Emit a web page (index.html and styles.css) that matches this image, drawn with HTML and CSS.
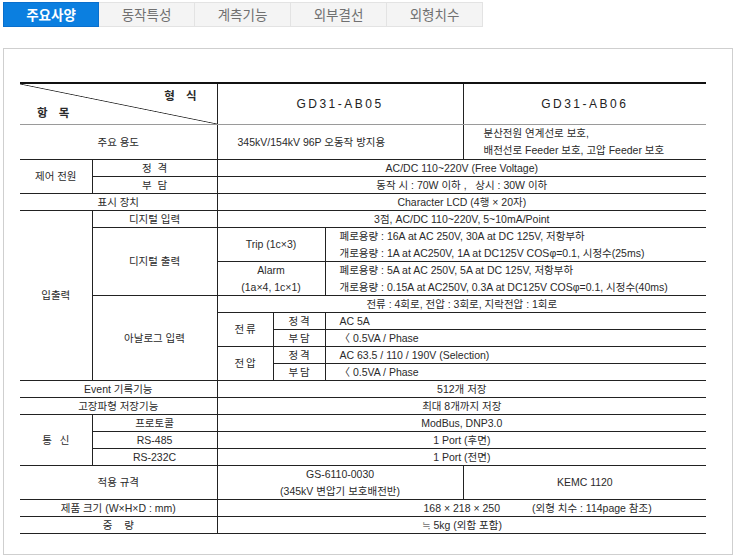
FILE: index.html
```html
<!DOCTYPE html>
<html lang="ko">
<head>
<meta charset="utf-8">
<title>주요사양</title>
<link rel="stylesheet" href="styles.css">
</head>
<body>
<div class="tabs">
  <div class="tab active">주요사양</div>
  <div class="tab">동작특성</div>
  <div class="tab">계측기능</div>
  <div class="tab">외부결선</div>
  <div class="tab">외형치수</div>
</div>
<div class="box">
  <table class="spec">
    <colgroup>
      <col class="c1"><col class="c2"><col class="c3"><col class="c4"><col class="c5"><col class="c6">
    </colgroup>
    <tr class="head">
      <td colspan="2" class="diag">
        <div class="diag-in">
          <span class="d-top">형 식</span>
          <span class="d-bot">항 목</span>
        </div>
      </td>
      <td colspan="3" class="model">GD31-AB05</td>
      <td class="model">GD31-AB06</td>
    </tr>
    <tr class="tall">
      <td colspan="2">주요 용도</td>
      <td colspan="3" class="left20">345kV/154kV 96P 오동작 방지용</td>
      <td class="left20 two">분산전원 연계선로 보호,<br>배전선로 Feeder 보호, 고압 Feeder 보호</td>
    </tr>
    <tr>
      <td rowspan="2">제어 전원</td>
      <td class="sp3">정 격</td>
      <td colspan="4">AC/DC 110~220V (Free Voltage)</td>
    </tr>
    <tr>
      <td class="sp3">부 담</td>
      <td colspan="4">동작 시 : 70W 이하 ,&nbsp;&nbsp; 상시 : 30W 이하</td>
    </tr>
    <tr>
      <td colspan="2">표시 장치</td>
      <td colspan="4">Character LCD (4행 × 20자)</td>
    </tr>
    <tr>
      <td rowspan="8">입출력</td>
      <td>디지털 입력</td>
      <td colspan="4">3점, AC/DC 110~220V, 5~10mA/Point</td>
    </tr>
    <tr class="dbl">
      <td rowspan="2">디지털 출력</td>
      <td colspan="2">Trip (1c×3)</td>
      <td colspan="2" class="left14 two">폐로용량 : 16A at AC 250V, 30A at DC 125V, 저항부하<br>개로용량 : 1A at AC250V, 1A at DC125V COSφ=0.1, 시정수(25ms)</td>
    </tr>
    <tr class="dbl">
      <td colspan="2" class="two">Alarm<br>(1a×4, 1c×1)</td>
      <td colspan="2" class="left14 two">폐로용량 : 5A at AC 250V, 5A at DC 125V, 저항부하<br>개로용량 : 0.15A at AC250V, 0.3A at DC125V COSφ=0.1, 시정수(40ms)</td>
    </tr>
    <tr>
      <td rowspan="5">아날로그 입력</td>
      <td colspan="4">전류 : 4회로, 전압 : 3회로, 지락전압 : 1회로</td>
    </tr>
    <tr>
      <td rowspan="2" class="sp1">전 류</td>
      <td class="sp1">정 격</td>
      <td colspan="2" class="left14">AC 5A</td>
    </tr>
    <tr>
      <td class="sp1">부 담</td>
      <td colspan="2" class="left14">〈 0.5VA / Phase</td>
    </tr>
    <tr>
      <td rowspan="2" class="sp1">전 압</td>
      <td class="sp1">정 격</td>
      <td colspan="2" class="left14">AC 63.5 / 110 / 190V (Selection)</td>
    </tr>
    <tr>
      <td class="sp1">부 담</td>
      <td colspan="2" class="left14">〈 0.5VA / Phase</td>
    </tr>
    <tr>
      <td colspan="2">Event 기록기능</td>
      <td colspan="4">512개 저장</td>
    </tr>
    <tr>
      <td colspan="2">고장파형 저장기능</td>
      <td colspan="4">최대 8개까지 저장</td>
    </tr>
    <tr>
      <td rowspan="3" class="sp6">통 신</td>
      <td>프로토콜</td>
      <td colspan="4">ModBus, DNP3.0</td>
    </tr>
    <tr>
      <td>RS-485</td>
      <td colspan="4">1 Port (후면)</td>
    </tr>
    <tr>
      <td>RS-232C</td>
      <td colspan="4">1 Port (전면)</td>
    </tr>
    <tr class="dbl">
      <td colspan="2">적용 규격</td>
      <td colspan="3" class="two">GS-6110-0030<br>(345kV 변압기 보호배전반)</td>
      <td>KEMC 1120</td>
    </tr>
    <tr>
      <td colspan="2">제품 크기 (W×H×D : mm)</td>
      <td colspan="4">
        <div class="size">
          <span></span>
          <span>168 × 218 × 250</span>
          <span class="note">(외형 치수 : 114page 참조)</span>
        </div>
      </td>
    </tr>
    <tr>
      <td colspan="2" class="sp12">중 량</td>
      <td colspan="4">≒ 5kg (외함 포함)</td>
    </tr>
  </table>
</div>
</body>
</html>
```
FILE: styles.css
```css
html, body {
  margin: 0;
  padding: 0;
  background: #fff;
}

body {
  font-family: "Noto Sans CJK KR", "Liberation Sans", sans-serif;
}

.tabs {
  display: flex;
  margin: 2px 0 0 3px;
}

.tab {
  box-sizing: border-box;
  width: 96px;
  height: 25px;
  border: 1px solid #e3e3e3;
  border-left: none;
  background: #f4f4f4;
  color: #707070;
  font-size: 13.5px;
  line-height: 23px;
  text-align: center;
}

.tab.active {
  background: #0b7fe0;
  border: 1px solid #0a6fcc;
  color: #fff;
  font-weight: bold;
}

.box {
  box-sizing: border-box;
  width: 730px;
  height: 507px;
  margin: 21px 0 0 3px;
  border: 1px solid #cfcfcf;
  padding: 33px 0 0 16px;
}

.spec {
  border-collapse: collapse;
  table-layout: fixed;
  width: 686px;
  border-top: 2px solid #111;
  border-left: hidden;
  border-right: hidden;
  font-family: "Liberation Sans", "Noto Sans CJK KR", sans-serif;
  font-size: 10.5px;
  color: #2a2a2a;
}

.c1 { width: 72px; }
.c2 { width: 125px; }
.c3 { width: 56px; }
.c4 { width: 52px; }
.c5 { width: 138px; }
.c6 { width: 243px; }

.spec td {
  border: 1px solid #222;
  padding: 0;
  height: 16px;
  line-height: 15px;
  text-align: center;
  white-space: nowrap;
  overflow: hidden;
}

.spec tr.head td {
  height: 40px;
  border-bottom-color: #9a9a9a;
}

.spec tr.tall td {
  height: 34px;
}

.spec tr.tall td.two {
  line-height: 17px;
}

.spec tr.dbl td {
  height: 33px;
}

.spec td.two {
  line-height: 16.5px;
}

.spec td.left20 {
  text-align: left;
  padding-left: 20px;
}

.spec td.left14 {
  text-align: left;
  padding-left: 14px;
}

.sp1 { word-spacing: -1px; }
.sp3 { word-spacing: 3px; }
.sp6 { word-spacing: 5px; }
.sp12 { word-spacing: 9px; }

.diag {
  background: linear-gradient(to bottom left, transparent calc(50% - 0.8px), #333 50%, transparent calc(50% + 0.8px));
}

.diag-in {
  height: 40px;
  display: flex;
  flex-direction: column;
  justify-content: space-between;
  padding: 4px 0 5px;
  box-sizing: border-box;
  font-family: "Noto Sans CJK KR", sans-serif;
  font-size: 11.5px;
  font-weight: bold;
  line-height: 14px;
}

.d-top {
  align-self: flex-end;
  margin-right: 20px;
  word-spacing: 8px;
}

.d-bot {
  align-self: flex-start;
  margin-left: 17px;
  word-spacing: 8px;
}

.model {
  font-size: 12px;
  letter-spacing: 2.5px;
  color: #222;
}

.size {
  display: grid;
  grid-template-columns: 1fr auto 1fr;
}

.size .note {
  text-align: left;
  padding-left: 32px;
}
```
